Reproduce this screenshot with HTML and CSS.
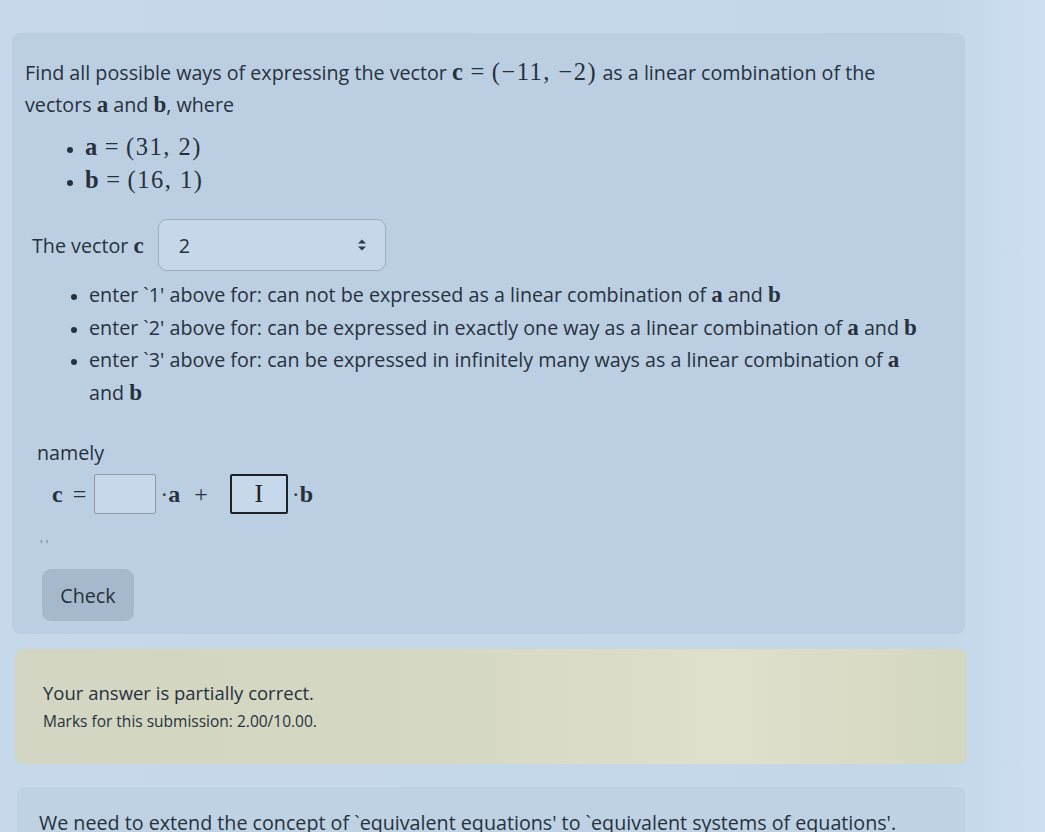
FILE: index.html
```html
<!DOCTYPE html>
<html lang="en">
<head>
  <meta charset="UTF-8">
  <title>Quiz question</title>
  <link rel="stylesheet" href="styles.css">
</head>
<body>
  <div class="page">

    <!-- question text and answer fields -->
    <div class="que-content">
      <p class="qtext">Find all possible ways of expressing the vector <span class="m wide"><b>c</b><span class="rel">=</span>(−11, −2)</span> as a linear combination of the vectors <span class="m"><b>a</b></span> and <span class="m"><b>b</b></span>, where</p>
      <ul class="vectors">
        <li><span class="m wide"><b>a</b><span class="rel">=</span>(31, 2)</span></li>
        <li><span class="m wide"><b>b</b><span class="rel">=</span>(16, 1)</span></li>
      </ul>

      <div class="choice-row">
        <span>The vector <span class="m"><b>c</b></span></span>
        <div class="select">
          <span>2</span>
          <svg width="10" height="14" viewBox="0 0 10 14"><path d="M1 5.5 L5 1.5 L9 5.5 Z M1 8.5 L5 12.5 L9 8.5 Z" fill="#2b3a4a"/></svg>
        </div>
      </div>

      <ul class="options">
        <li>enter `1' above for: can not be expressed as a linear combination of <span class="m"><b>a</b></span> and <span class="m"><b>b</b></span></li>
        <li>enter `2' above for: can be expressed in exactly one way as a linear combination of <span class="m"><b>a</b></span> and <span class="m"><b>b</b></span></li>
        <li>enter `3' above for: can be expressed in infinitely many ways as a linear combination of <span class="m"><b>a</b></span> and <span class="m"><b>b</b></span></li>
      </ul>

      <p class="namely">namely</p>
      <div class="combo m">
        <b>c</b><span class="eq">=</span>
        <span class="box"></span>
        <span class="dot">·<b>a</b></span>
        <span class="plus">+</span>
        <span class="box focus"><span class="ibeam">I</span></span>
        <span class="dot">·<b>b</b></span>
      </div>
      <div class="ticks">' '</div>

      <button class="check">Check</button>
    </div>

    <!-- grading feedback -->
    <div class="feedback">
      <p class="result">Your answer is partially correct.</p>
      <p class="marks">Marks for this submission: 2.00/10.00.</p>
    </div>

    <div class="general">
      <p>We need to extend the concept of `equivalent equations' to `equivalent systems of equations'.</p>
    </div>

  </div>
</body>
</html>
```

FILE: styles.css
```css
* {
    margin: 0;
    padding: 0;
    box-sizing: border-box;
}

body {
    background: linear-gradient(90deg, #c6d8ea 0%, #c4d7e9 90%, #cddff0 100%);
    color: #27313d;
    font-family: "Open Sans", "Noto Sans", sans-serif;
    font-size: 19.7px;
    height: 832px;
    overflow: hidden;
}

.page {
    width: 968px;
    padding: 33px 0 0 12px;
}

/* math bits */
.m {
    font-family: "Liberation Serif", "DejaVu Serif", serif;
    font-size: 23px;
    line-height: 1;
}

.m.wide {
    font-size: 24.5px;
    letter-spacing: 1.5px;
}

.m b {
    font-weight: bold;
}

.rel {
    margin: 0 6px;
}

.que-content {
    background: #bccfe2;
    border-radius: 8px;
    padding: 24px 13px 13px 13px;
    width: 953px;
}

.qtext {
    line-height: 32px;
    padding-right: 50px;
}

.vectors {
    margin: 10px 0 0 60px;
    line-height: 33px;
}

.vectors li::marker,
.options li::marker {
    font-size: 16px;
}

.choice-row {
    display: flex;
    align-items: center;
    gap: 14px;
    margin: 22px 0 0 7px;
    height: 52px;
}

.select {
    width: 228px;
    height: 52px;
    border: 1px solid #9eaebd;
    border-radius: 9px;
    background: #c5d7e8;
    display: flex;
    align-items: center;
    justify-content: space-between;
    padding: 0 18px 0 20px;
}

.options {
    margin: 8px 0 0 64px;
    line-height: 32.5px;
    padding-right: 28px;
}

.namely {
    margin: 30px 0 0 12px;
}

.combo {
    display: flex;
    align-items: center;
    margin: 8px 0 0 27px;
    height: 40px;
    font-size: 24px;
}

.eq {
    margin: 0 8px 0 10px;
}

.box {
    width: 62px;
    height: 40px;
    border: 1px solid #8e9aa6;
    border-radius: 2px;
    background: #c6d8ea;
    display: flex;
    align-items: center;
    justify-content: center;
}

.box.focus {
    width: 58px;
    border: 2px solid #1c2229;
}

.ibeam {
    font-family: "Liberation Serif", serif;
    font-size: 26px;
    font-weight: normal;
    color: #222;
}

.dot {
    margin: 0 8px 0 4px;
}

.plus {
    margin: 0 22px 0 6px;
}

.ticks {
    margin: 22px 0 0 15px;
    font-size: 12px;
    color: #6d7c8b;
    height: 18px;
}

.check {
    margin: 15px 0 0 17px;
    width: 92px;
    height: 52px;
    border: none;
    border-radius: 9px;
    background: #a6b8cb;
    color: #27313d;
    font-family: "Open Sans", sans-serif;
    font-size: 19.7px;
}

.feedback {
    margin: 15px 0 0 3px;
    width: 952px;
    height: 115px;
    border-radius: 8px;
    background: linear-gradient(90deg, #d2d6c2 0%, #d5d8c2 45%, #dfe0cc 75%, #d4d7c0 100%);
    padding: 30px 28px;
}

.result {
    font-size: 18.5px;
    line-height: 28px;
}

.marks {
    font-size: 15.5px;
    line-height: 28px;
}

.general {
    margin: 23px 0 0 5px;
    width: 948px;
    height: 80px;
    border-radius: 8px;
    background: #bfd2e4;
    padding: 22px 22px;
}
```
